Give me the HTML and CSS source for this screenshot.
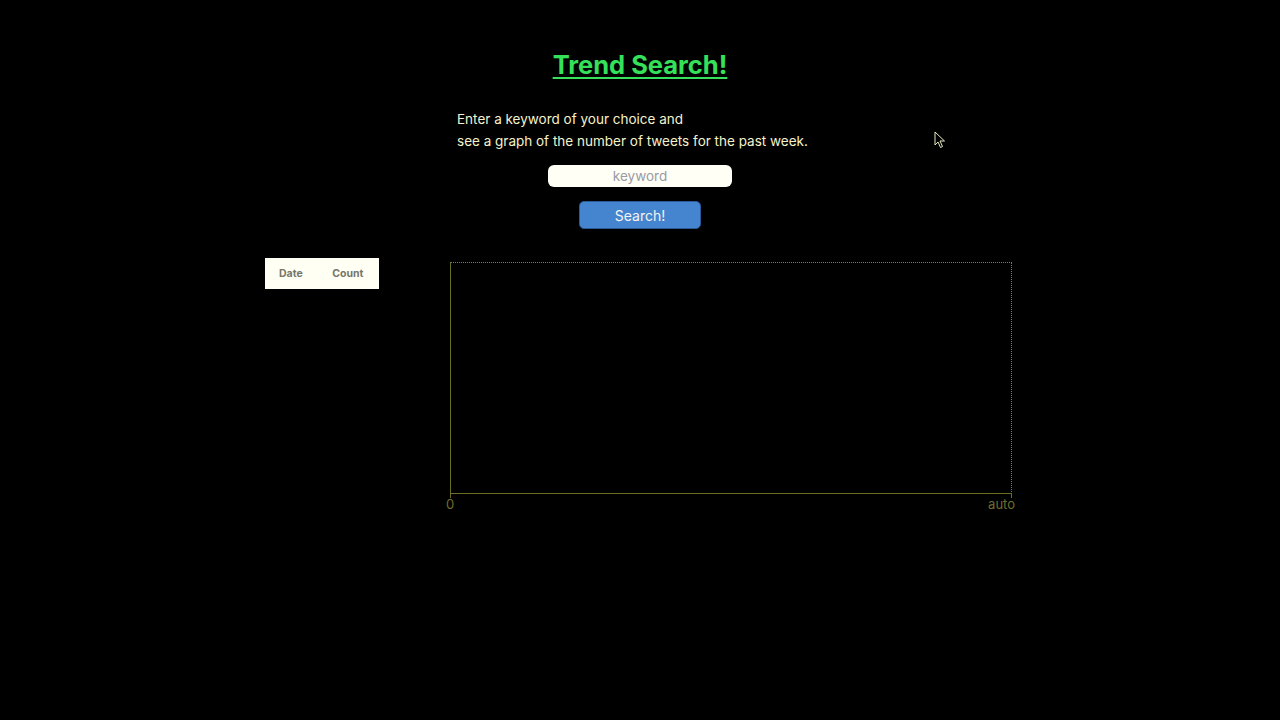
FILE: index.html
```html
<!DOCTYPE html>
<html>
<head>
<meta charset="utf-8">
<link rel="stylesheet" href="styles.css">
</head>
<body>
<div class="page">
  <h1 class="title">Trend Search!</h1>
  <div class="intro">
    <p>Enter a keyword of your choice and<br>see a graph of the number of tweets for the past week.</p>
  </div>
  <div class="form">
    <input class="keyword" type="text" placeholder="keyword">
    <button class="search">Search!</button>
  </div>
  <div class="results">
    <table class="data">
      <thead><tr><th>Date</th><th>Count</th></tr></thead>
    </table>
    <div class="chart">
      <div class="plot">
        <span class="tick tick-left"></span>
        <span class="tick tick-right"></span>
      </div>
      <div class="labels"><span>0</span><span>auto</span></div>
    </div>
  </div>
</div>
<svg class="cursor" width="12" height="18" viewBox="0 0 12 18"><path d="M1 1 L1 14 L4 11 L6.5 16.5 L8.5 15.5 L6 10 L10.5 10 Z" fill="#000" stroke="#e8e8c0" stroke-width="1"/></svg>
</body>
</html>
```
FILE: styles.css
```css
html, body {
  margin: 0;
  padding: 0;
  background: #000;
  height: 100%;
}
body {
  font-family: Inter, "Open Sans", "Liberation Sans", sans-serif;
  position: relative;
}
.page {
  display: flex;
  flex-direction: column;
  align-items: center;
  padding-top: 49px;
}
.title {
  margin: 0;
  font-size: 25.5px;
  line-height: 32px;
  font-weight: 700;
  color: #35e05a;
  text-decoration: underline;
  text-decoration-thickness: 2px;
  text-underline-offset: 3px;
}
.intro {
  width: 366px;
  margin-top: 27px;
}
.intro p {
  margin: 0;
  font-size: 13.5px;
  line-height: 22px;
  color: #f4f2cc;
}
.form {
  display: flex;
  flex-direction: column;
  align-items: center;
  margin-top: 13px;
}
.keyword {
  box-sizing: border-box;
  width: 184px;
  height: 22px;
  border: none;
  border-radius: 6px;
  background: #fffff6;
  text-align: center;
  font-family: inherit;
  font-size: 13.5px;
  padding: 0;
  outline: none;
}
.keyword::placeholder {
  color: #9a9aa4;
}
.search {
  margin-top: 14px;
  width: 122px;
  height: 28px;
  border: 1px solid #2a5a9a;
  border-radius: 5px;
  background: #4584ce;
  color: #f4f4f4;
  font-family: inherit;
  font-size: 14px;
}
.results {
  display: flex;
  width: 750px;
  margin-top: 29px;
  align-items: flex-start;
}
.data {
  width: 114px;
  height: 30px;
  background: #fffff4;
  border-collapse: collapse;
  margin-right: 71px;
  flex: none;
}
.data th {
  font-size: 10.5px;
  font-weight: 700;
  color: #76766a;
  padding: 0 0 1px 2px;
  height: 30px;
}
.chart {
  width: 569px;
  margin-top: 4px;
  flex: none;
}
.plot {
  position: relative;
  box-sizing: border-box;
  width: 562px;
  height: 232px;
  border-left: 1.5px solid #6e6e22;
  border-bottom: 1.5px solid #6e6e22;
  border-top: 1px dotted #7a7a5a;
  border-right: 1px dotted #7a7a5a;
}
.tick {
  position: absolute;
  bottom: -5px;
  width: 1px;
  height: 4px;
  background: #6e6e22;
}
.tick-left { left: -1px; }
.tick-right { right: -1px; }
.labels {
  display: flex;
  justify-content: space-between;
  width: 569px;
  margin-left: -4px;
  margin-top: 2px;
  font-size: 13px;
  line-height: 16px;
  color: #6e6e30;
}
.cursor {
  position: absolute;
  left: 934px;
  top: 131px;
}
```
